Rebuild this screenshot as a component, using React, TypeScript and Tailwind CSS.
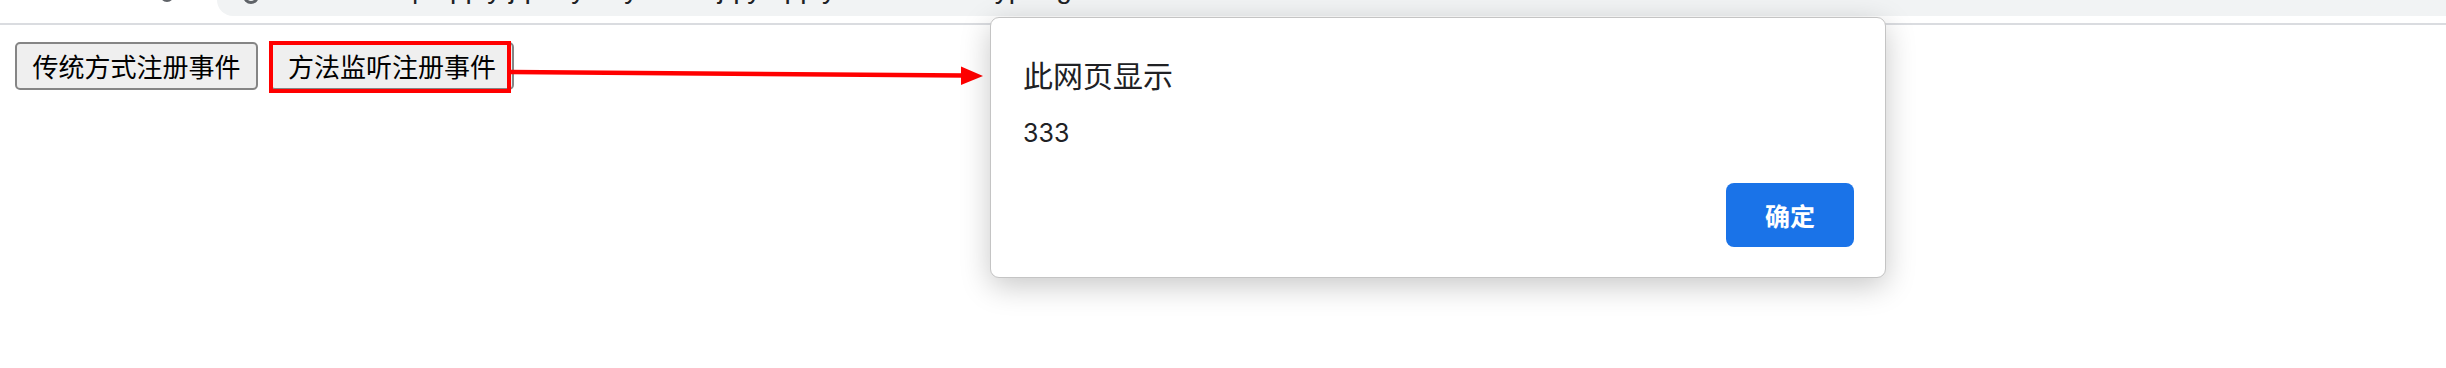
export default function App() {
  const cjk = { fontFamily: '"Noto Sans CJK SC", "Noto Sans", sans-serif' };

  return (
    <div className="relative w-[2446px] h-[368px] overflow-hidden bg-white" style={cjk}>
      {/* browser chrome, cut off at the top */}
      <div className="flex h-[16px]">
        <div className="w-[217px] relative">
          <span className="absolute left-[160px] top-[-12px] w-[14px] h-[14px] rounded-full border-[2px] border-[#5f6368]" />
        </div>
        <div className="relative flex-1 bg-[#f1f3f4] rounded-bl-[24px] overflow-hidden">
          <span className="absolute left-[26px] top-[-12px] w-[16px] h-[16px] rounded-full border-[3px] border-[#5f6368]" />
          <span
            className="absolute left-[70px] top-[-25px] whitespace-nowrap text-[28px] leading-none text-[#202124]"
            style={{ fontFamily: '"Liberation Sans", "Noto Sans CJK SC", sans-serif' }}
          >
            127.0.0.1 | /apply/jquery/day01/06-jq.y/apply/index.html?type=g
          </span>
        </div>
      </div>
      <div className="h-[7px]" />
      <div className="h-[2px] bg-[#dadce0]" />

      {/* page content */}
      <div className="flex gap-[12px] pl-[15px] pt-[17px]">
        <button className="w-[243px] h-[48px] rounded-[5px] border-[2px] border-[#858585] bg-[#efefef] text-[26px] leading-none text-black flex items-center justify-center">
          传统方式注册事件
        </button>
        <button className="w-[244px] h-[48px] rounded-[5px] border-[2px] border-[#858585] bg-[#efefef] text-[26px] leading-none text-black flex items-center justify-center">
          方法监听注册事件
        </button>
      </div>

      {/* annotation: red box + arrow */}
      <div className="absolute left-[269px] top-[41px] w-[242px] h-[52px] border-[4px] border-[#ff0000]" />
      <svg className="absolute left-0 top-0" width="1000" height="120" viewBox="0 0 1000 120">
        <line x1="511" y1="72" x2="964" y2="75.6" stroke="#ff0000" strokeWidth="4.5" />
        <polygon points="983,76 961,66.5 961,85" fill="#ff0000" />
      </svg>

      {/* alert dialog */}
      <div className="absolute left-[990px] top-[17px] w-[896px] h-[261px] bg-white rounded-[9px] border border-[#c4c4c4] shadow-[0_8px_30px_rgba(0,0,0,0.22)] flex flex-col pt-[41px] pl-[32px] pr-[31px]">
        <div className="text-[30px] leading-none text-[#202124] h-[30px]">此网页显示</div>
        <div
          className="mt-[32px] text-[25px] leading-none text-[#202124] h-[25px]"
          style={{ fontFamily: 'Inter, "Noto Sans", sans-serif' }}
        >
          333
        </div>
        <div className="mt-[37px] flex justify-end">
          <button className="w-[128px] h-[64px] rounded-[8px] bg-[#1a73e8] text-white text-[25px] font-bold leading-none flex items-center justify-center">
            确定
          </button>
        </div>
      </div>
    </div>
  );
}
